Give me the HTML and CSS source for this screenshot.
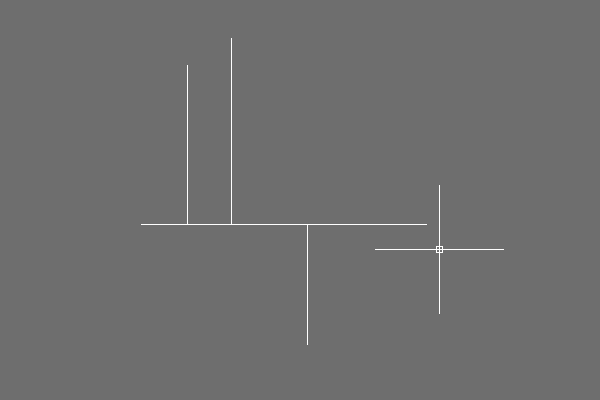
FILE: index.html
```html
<!DOCTYPE html>
<html lang="en">

<head>
    <meta charset="UTF-8">
    <meta name="viewport" content="width=device-width, initial-scale=1.0">
    <title>Drawing</title>
    <link rel="stylesheet" href="styles.css">
</head>

<body>
    <main class="workspace">
        <svg class="drawing" role="img" aria-label="Line drawing with crosshair cursor">
            <!-- Lines -->
            <g class="lines">
                <path d="M141 224.5H427" />
                <path d="M187.5 65V224" />
                <path d="M231.5 38V224" />
                <path d="M307.5 225V345" />
            </g>

            <!-- Crosshair with pickbox -->
            <g class="crosshair">
                <path d="M375 249.5H504" />
                <path d="M439.5 185V314" />
                <rect x="436.5" y="246.5" width="6" height="6" />
            </g>
        </svg>
    </main>
</body>

</html>
```

FILE: styles.css
```css
* {
    margin: 0;
    padding: 0;
    box-sizing: border-box;
}
/* Drawing area */

.workspace {
    min-height: 100vh;
    display: flex;
    background-color: #6e6e6e;
}

.drawing {
    flex: 1;
    min-width: 0;
}
/* Lines and cursor */

.lines,
.crosshair {
    fill: none;
    stroke: #ffffff;
    stroke-width: 1;
    shape-rendering: crispEdges;
}
```
